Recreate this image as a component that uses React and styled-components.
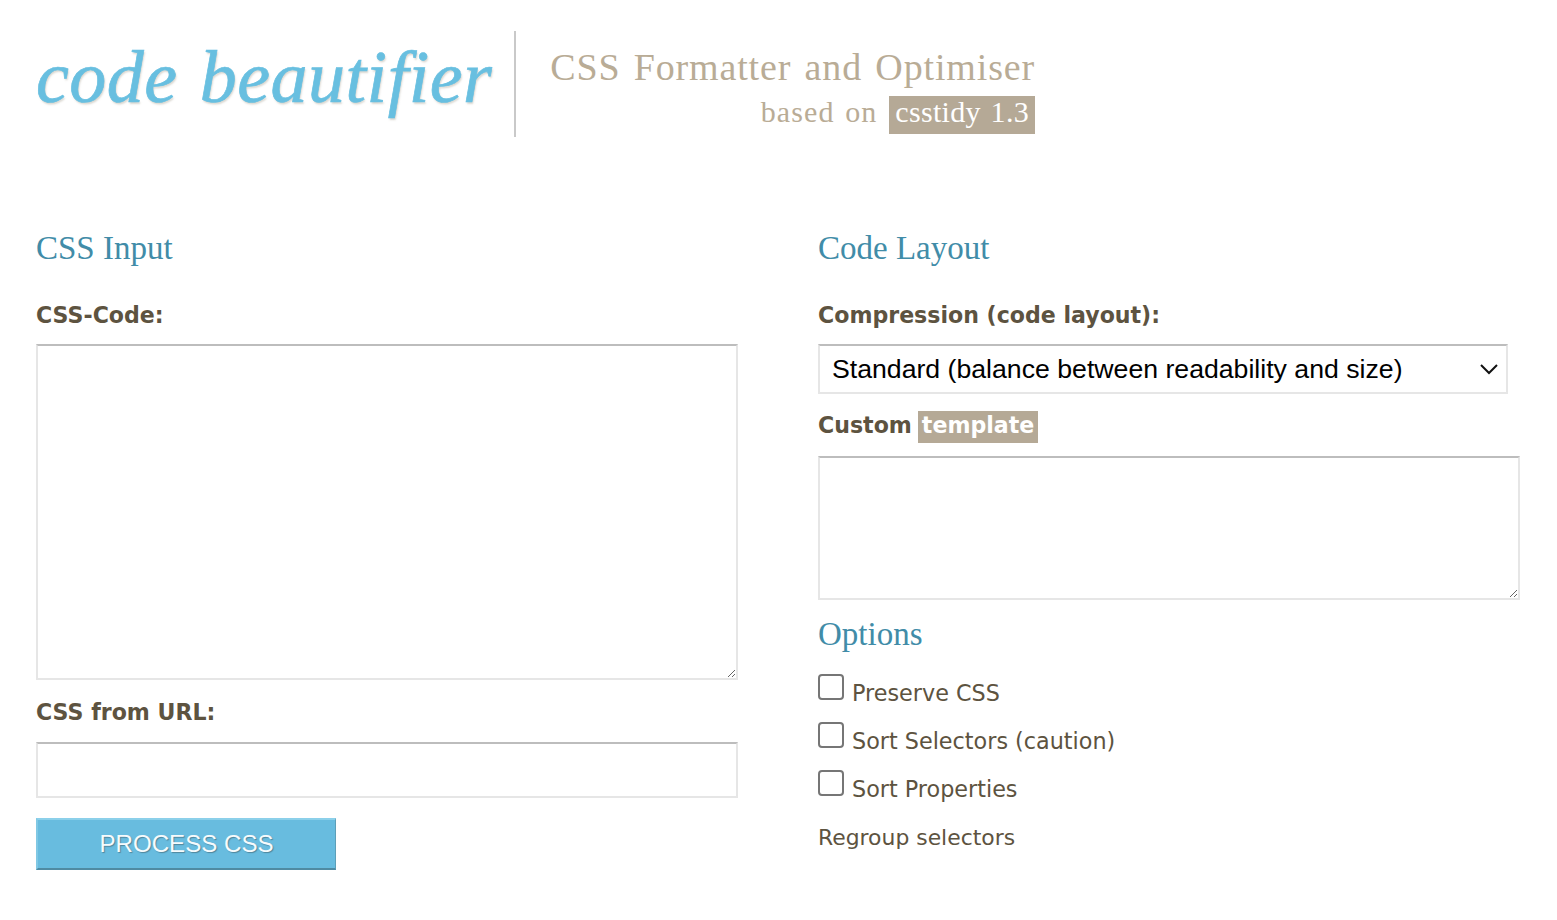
import React from "react";
import styled, { createGlobalStyle } from "styled-components";

const GlobalStyle = createGlobalStyle`
  html, body {
    margin: 0;
    padding: 0;
    background: #fff;
  }
`;

const Page = styled.div`
  width: 1557px;
  height: 920px;
  padding: 31px 0 0 36px;
  box-sizing: border-box;
  overflow: hidden;
`;

// --- Header ---

const Header = styled.header`
  display: flex;
  height: 106px;
`;

const Logo = styled.h1`
  margin: 0;
  width: 478px;
  height: 106px;
  border-right: 2px solid #c9c9c9;
  box-sizing: content-box;
  font: italic 400 74px/92px "Liberation Serif", serif;
  letter-spacing: 0.5px;
  word-spacing: 3px;
  color: #68bfe0;
  -webkit-text-stroke: 0.7px #68bfe0;
  text-shadow: 1px 2px 2px rgba(150, 140, 120, 0.35);
  white-space: nowrap;
`;

const Tagline = styled.div`
  margin-left: 33px;
  width: 486px;
  text-align: right;
  color: #b9ac96;
  font-family: "Liberation Serif", serif;
`;

const TaglineTitle = styled.div`
  font-size: 38px;
  line-height: 44px;
  margin-top: 14px;
  letter-spacing: 0.85px;
  word-spacing: 3px;
  white-space: nowrap;
`;

const TaglineSub = styled.div`
  font-size: 30px;
  margin-top: 7px;
  word-spacing: 2px;
  display: flex;
  justify-content: flex-end;
  align-items: flex-start;
  gap: 12px;
`;

const BasedOn = styled.span`
  line-height: 31px;
  letter-spacing: 1.1px;
`;

const VersionBadge = styled.span`
  background: #b5a996;
  color: #fff;
  padding: 0 6px;
  height: 38px;
  line-height: 32px;
  letter-spacing: 0.3px;
`;

// --- Form columns ---

const Columns = styled.div`
  display: grid;
  grid-template-columns: 702px 702px;
  column-gap: 80px;
  margin-top: 90px;
`;

const Column = styled.section`
  display: flex;
  flex-direction: column;
  align-items: flex-start;
`;

const Heading = styled.h2`
  margin: ${(p) => p.$top || 0}px 0 0;
  font: 400 33px/42px "Liberation Serif", serif;
  color: #418ca8;
  height: 42px;
`;

const Label = styled.label`
  display: flex;
  align-items: flex-start;
  gap: 6px;
  height: 32px;
  margin-top: ${(p) => p.$top || 0}px;
  font: 700 22.1px/34px "DejaVu Sans", Verdana, sans-serif;
  color: #5d5340;
  white-space: nowrap;
`;

const Tag = styled.span`
  background: #b5a996;
  color: #fff;
  padding: 0 4px;
  height: 32px;
  line-height: 29px;
`;

const CustomText = styled.span`
  line-height: 29px;
  height: 32px;
`;

const fieldBorder = `
  border-style: solid;
  border-width: 2px;
  border-color: #bdbdbd #e6e6e6 #e6e6e6 #e6e6e6;
  box-sizing: border-box;
  background: #fff;
  outline: none;
`;

const TextArea = styled.textarea`
  ${fieldBorder}
  display: block;
  width: 702px;
  height: ${(p) => p.$height}px;
  margin-top: ${(p) => p.$top}px;
  padding: 8px;
  border-radius: 0;
`;

const TextInput = styled.input`
  ${fieldBorder}
  display: block;
  width: 702px;
  height: 56px;
  margin-top: 15px;
  padding: 8px;
`;

const SelectWrap = styled.div`
  ${fieldBorder}
  width: 690px;
  height: 50px;
  margin-top: 14px;
  padding: 0 7px 0 12px;
  display: flex;
  align-items: center;
  justify-content: space-between;
  font: 400 26.67px/46px "Liberation Sans", Arial, sans-serif;
  color: #000;
`;

const SelectChevron = styled.svg`
  width: 20px;
  height: 14px;
  flex: none;
`;

const SubmitButton = styled.button`
  width: 300px;
  height: 52px;
  margin-top: 20px;
  padding: 0;
  background: #68bcdf;
  border: none;
  border-top: 2px solid #8cd0ea;
  border-right: 1px solid #5d9fb8;
  border-bottom: 2px solid #4f8ba3;
  border-left: 2px solid #80c8e4;
  box-sizing: border-box;
  color: #f6fbfd;
  font: 400 24.1px/46px "Liberation Sans", Arial, sans-serif;
  text-shadow: 1px 1px 1px rgba(60, 90, 100, 0.55);
`;

// --- Options ---

const OptionList = styled.div`
  display: flex;
  flex-direction: column;
  margin-top: 19px;
  gap: 22px;
`;

const Option = styled.label`
  display: flex;
  align-items: flex-start;
  gap: 8px;
  height: 26px;
  font: 400 22.3px/32px "DejaVu Sans", Verdana, sans-serif;
  color: #5d5340;
  white-space: nowrap;
`;

const CheckBox = styled.input`
  appearance: none;
  margin: 0;
  width: 26px;
  height: 26px;
  flex: none;
  border: 2px solid #767676;
  border-radius: 4px;
  background: #fff;
  box-sizing: border-box;
`;

const OptionText = styled.span`
  display: block;
  margin-top: 3px;
`;

const PlainOption = styled.div`
  margin-top: 26px;
  font: 400 21.9px/32px "DejaVu Sans", Verdana, sans-serif;
  color: #5d5340;
  white-space: nowrap;
`;

const App = () => {
  return (
    <Page>
      <GlobalStyle />
      <Header>
        <Logo>code beautifier</Logo>
        <Tagline>
          <TaglineTitle>CSS Formatter and Optimiser</TaglineTitle>
          <TaglineSub>
            <BasedOn>based on</BasedOn>
            <VersionBadge>csstidy 1.3</VersionBadge>
          </TaglineSub>
        </Tagline>
      </Header>
      <Columns>
        <Column>
          <Heading>CSS Input</Heading>
          <Label $top={29}>CSS-Code:</Label>
          <TextArea $height={336} $top={14} />
          <Label $top={15}>CSS from URL:</Label>
          <TextInput />
          <SubmitButton>PROCESS CSS</SubmitButton>
        </Column>
        <Column>
          <Heading>Code Layout</Heading>
          <Label $top={29}>Compression (code layout):</Label>
          <SelectWrap>
            <span>Standard (balance between readability and size)</span>
            <SelectChevron viewBox="0 0 20 14" fill="none" stroke="#111" strokeWidth="2">
              <path d="M2 3 L10 11 L18 3" />
            </SelectChevron>
          </SelectWrap>
          <Label $top={17}>
            <CustomText>Custom</CustomText>
            <Tag>template</Tag>
          </Label>
          <TextArea $height={144} $top={13} />
          <Heading $top={13}>Options</Heading>
          <OptionList>
            <Option>
              <CheckBox type="checkbox" />
              <OptionText>Preserve CSS</OptionText>
            </Option>
            <Option>
              <CheckBox type="checkbox" />
              <OptionText>Sort Selectors (caution)</OptionText>
            </Option>
            <Option>
              <CheckBox type="checkbox" />
              <OptionText>Sort Properties</OptionText>
            </Option>
          </OptionList>
          <PlainOption>Regroup selectors</PlainOption>
        </Column>
      </Columns>
    </Page>
  );
};

export default App;
